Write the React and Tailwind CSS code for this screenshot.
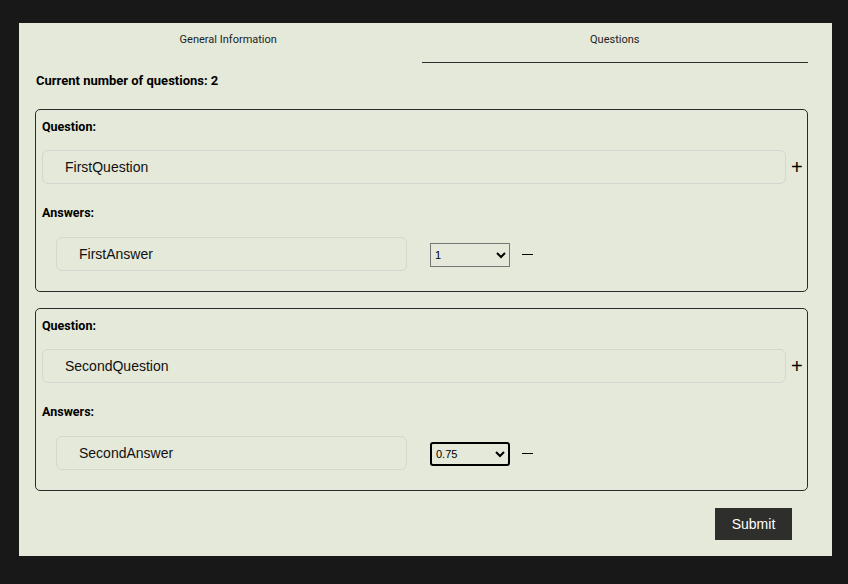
import React, { useState } from "react";

const QuestionCard = ({ question, answer, weight, focused }) => {
  const [q, setQ] = useState(question);
  const [a, setA] = useState(answer);
  const [w, setW] = useState(weight);

  return (
    <div className="border border-[#2b2b2b] rounded-[5px] pl-[6px] pr-[5px] pt-[9px] pb-[20px]">
      <label className="block text-[12.5px] leading-[16px] font-bold font-['Roboto',sans-serif] text-black">
        Question:
      </label>
      <div className="flex items-center mt-[15px]">
        <input
          type="text"
          value={q}
          onChange={(e) => setQ(e.target.value)}
          className="flex-1 h-[34px] border border-[#d4d6d0] rounded-[6px] bg-transparent pl-[22px] text-[14px] font-['Liberation_Sans',Arial,sans-serif] text-[#111] outline-none"
        />
        <span className="w-[11px] ml-[5px] text-center text-[20px] leading-none font-['Liberation_Sans',Arial,sans-serif] text-black">
          +
        </span>
      </div>
      <label className="block mt-[21px] text-[12.5px] leading-[16px] font-bold font-['Roboto',sans-serif] text-black">
        Answers:
      </label>
      <div className="flex items-center mt-[16px] pl-[14px]">
        <input
          type="text"
          value={a}
          onChange={(e) => setA(e.target.value)}
          className="w-[351px] h-[34px] border border-[#d4d6d0] rounded-[6px] bg-transparent pl-[22px] text-[14px] font-['Liberation_Sans',Arial,sans-serif] text-[#111] outline-none"
        />
        <select
          value={w}
          onChange={(e) => setW(e.target.value)}
          className={
            focused
              ? "ml-[23px] mt-[2px] w-[80px] h-[24px] border-2 border-black rounded-[3px] bg-transparent text-[11px] font-['Liberation_Sans',Arial,sans-serif] text-black outline-none"
              : "ml-[23px] mt-[2px] w-[80px] h-[24px] border border-[#767676] bg-transparent text-[11px] font-['Liberation_Sans',Arial,sans-serif] text-black outline-none"
          }
        >
          <option value="1">1</option>
          <option value="0.75">0.75</option>
          <option value="0.5">0.5</option>
          <option value="0.25">0.25</option>
          <option value="0">0</option>
        </select>
        <span className="ml-[12px] mt-[1px] w-[11px] h-[1px] bg-black"></span>
      </div>
    </div>
  );
};

const App = () => {
  const [tab, setTab] = useState("questions");

  return (
    <div className="min-h-[584px] bg-[#181818] pt-[23px] pb-[28px] pl-[19px] pr-[16px]">
      <div className="w-[813px] h-[533px] bg-[#e5e9d9] pl-[16px] pr-[24px]">
        <div className="grid grid-cols-2 font-['Roboto',sans-serif] text-[11px] text-[#222]">
          <button
            onClick={() => setTab("general")}
            className={
              tab === "general"
                ? "h-[40px] pb-[5px] border-b border-[#2d2d2d]"
                : "h-[40px] pb-[5px] border-b border-transparent"
            }
          >
            General Information
          </button>
          <button
            onClick={() => setTab("questions")}
            className={
              tab === "questions"
                ? "h-[40px] pb-[5px] border-b border-[#2d2d2d]"
                : "h-[40px] pb-[5px] border-b border-transparent"
            }
          >
            Questions
          </button>
        </div>

        <p className="mt-[10px] ml-[1px] text-[13px] leading-[16px] font-bold font-['Roboto',sans-serif] text-black">
          Current number of questions: 2
        </p>

        <div className="mt-[20px] flex flex-col gap-[16px]">
          <QuestionCard question="FirstQuestion" answer="FirstAnswer" weight="1" />
          <QuestionCard question="SecondQuestion" answer="SecondAnswer" weight="0.75" focused />
        </div>

        <div className="flex justify-end mt-[17px] pr-[16px]">
          <button className="w-[77px] h-[32px] bg-[#2e2f2c] text-white text-[14px] font-['Liberation_Sans',Arial,sans-serif]">
            Submit
          </button>
        </div>
      </div>
    </div>
  );
};

export default App;
